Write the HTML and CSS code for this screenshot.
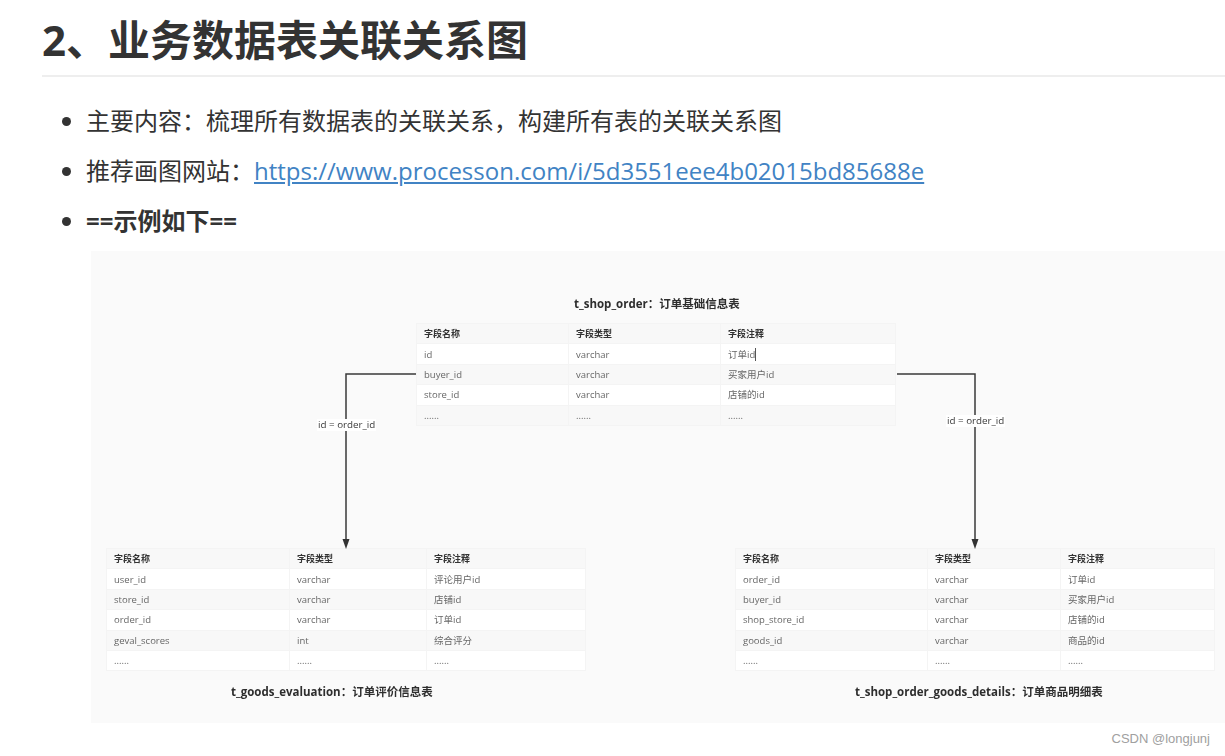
FILE: index.html
```html
<!DOCTYPE html>
<html lang="zh-CN">
<head>
<meta charset="utf-8">
<title>业务数据表关联关系图</title>
<link rel="stylesheet" href="styles.css">
</head>
<body>
<article class="article">
  <h2 class="heading">2、业务数据表关联关系图</h2>
  <ul class="points">
    <li>主要内容：梳理所有数据表的关联关系，构建所有表的关联关系图</li>
    <li>推荐画图网站：<a class="link" href="#">https://www.processon.com/i/5d3551eee4b02015bd85688e</a></li>
    <li><strong>==示例如下==</strong></li>
  </ul>
  <figure class="diagram">
    <div class="caption cap-order">t_shop_order：订单基础信息表</div>
    <table class="schema t-order">
      <tr><th>字段名称</th><th>字段类型</th><th>字段注释</th></tr>
      <tr><td>id</td><td>varchar</td><td><span class="caret">订单id</span></td></tr>
      <tr><td>buyer_id</td><td>varchar</td><td>买家用户id</td></tr>
      <tr><td>store_id</td><td>varchar</td><td>店铺的id</td></tr>
      <tr><td>......</td><td>......</td><td>......</td></tr>
    </table>
    <table class="schema t-eval">
      <tr><th>字段名称</th><th>字段类型</th><th>字段注释</th></tr>
      <tr><td>user_id</td><td>varchar</td><td>评论用户id</td></tr>
      <tr><td>store_id</td><td>varchar</td><td>店铺id</td></tr>
      <tr><td>order_id</td><td>varchar</td><td>订单id</td></tr>
      <tr><td>geval_scores</td><td>int</td><td>综合评分</td></tr>
      <tr><td>......</td><td>......</td><td>......</td></tr>
    </table>
    <table class="schema t-goods">
      <tr><th>字段名称</th><th>字段类型</th><th>字段注释</th></tr>
      <tr><td>order_id</td><td>varchar</td><td>订单id</td></tr>
      <tr><td>buyer_id</td><td>varchar</td><td>买家用户id</td></tr>
      <tr><td>shop_store_id</td><td>varchar</td><td>店铺的id</td></tr>
      <tr><td>goods_id</td><td>varchar</td><td>商品的id</td></tr>
      <tr><td>......</td><td>......</td><td>......</td></tr>
    </table>
    <svg class="wires" width="1134" height="472" viewBox="0 0 1134 472" aria-hidden="true">
      <path class="wire" d="M325 123H255V290"/>
      <path class="head" d="M251.500 288H258.500L255 298Z"/>
      <path class="wire" d="M806 123H884V290"/>
      <path class="head" d="M880.500 288H887.500L884 298Z"/>
    </svg>
    <span class="rel rel-left">id = order_id</span>
    <span class="rel rel-right">id = order_id</span>
    <div class="caption cap-eval">t_goods_evaluation：订单评价信息表</div>
    <div class="caption cap-goods">t_shop_order_goods_details：订单商品明细表</div>
  </figure>
</article>
<div class="watermark">CSDN @longjunj</div>
</body>
</html>
```

FILE: styles.css
```css
* { box-sizing: border-box; }
html, body { margin: 0; height: 756px; overflow: hidden; background: #fff; }
body {
  position: relative;
  color: #333;
  font-family: "Open Sans", "Noto Sans CJK SC", sans-serif;
}
.article { padding-left: 42px; }
.heading {
  margin: 0;
  height: 77px;
  padding-top: 17px;
  font-size: 42px;
  line-height: 46px;
  font-weight: 700;
  border-bottom: 2px solid #eee;
}
.points {
  margin: 0;
  padding: 19px 0 0 44px;
  list-style: disc;
  font-size: 24px;
  line-height: 50px;
}
.link { color: #4183c4; text-decoration: underline; }
.diagram {
  position: relative;
  width: 1134px;
  height: 472px;
  margin: 5px 0 0 49px;
  background: #fafafa;
}
.wires { position: absolute; left: 0; top: 0; filter: blur(.3px); pointer-events: none; }
.wire { fill: none; stroke: #3a3a3a; stroke-width: 1.500; }
.head { fill: #333; }
.caption {
  position: absolute;
  font-size: 11.500px;
  line-height: 16px;
  font-weight: 700;
  color: #2e2e2e;
  white-space: nowrap;
  filter: blur(.5px);
}
.cap-order { left: 483px; top: 45px; }
.cap-eval { left: 140px; top: 433px; }
.cap-goods { left: 764px; top: 433px; }
.schema {
  position: absolute;
  width: 480px;
  table-layout: fixed;
  border-collapse: collapse;
  font-size: 9.500px;
  color: #666;
  background: #fff;
  filter: blur(.55px);
}
.schema th, .schema td {
  height: 20.400px;
  padding: 1px 0 0 7px;
  text-align: left;
  border: 1px solid #f4f4f4;
  line-height: 12px;
  white-space: nowrap;
  overflow: hidden;
}
.schema th { color: #333; font-weight: 700; font-size: 9px; background: #f8f8f8; }
.schema tr:nth-child(odd) td { background: #f8f8f8; }
.caret { border-right: 1px solid #555; }
.t-order { left: 325px; top: 72px; }
.t-eval { left: 15px; top: 297px; }
.t-goods { left: 644px; top: 297px; }
.t-order th:nth-child(1) { width: 152px; }
.t-order th:nth-child(2) { width: 152px; }
.t-eval th:nth-child(1) { width: 183px; }
.t-eval th:nth-child(2) { width: 137px; }
.t-goods th:nth-child(1) { width: 192px; }
.t-goods th:nth-child(2) { width: 133px; }
.rel {
  position: absolute;
  padding: 0 1px;
  background: #fff;
  font-size: 9.800px;
  line-height: 12px;
  color: #3a3a3a;
  white-space: nowrap;
  filter: blur(.3px);
}
.rel-left { left: 226px; top: 168px; }
.rel-right { left: 855px; top: 164px; }
.watermark {
  position: absolute;
  right: 15px;
  top: 731px;
  font-family: "Liberation Sans", sans-serif;
  font-size: 13px;
  line-height: 16px;
  color: #a0a0a0;
}
```
